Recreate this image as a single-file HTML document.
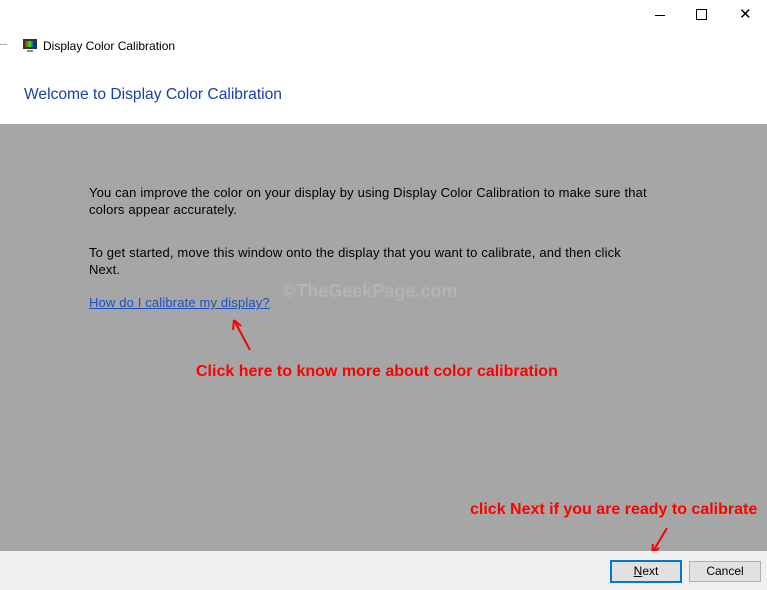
<!DOCTYPE html>
<html><head><style>
body{margin:0;width:767px;height:590px;position:relative;overflow:hidden;background:#fff;font-family:"Liberation Sans",sans-serif;}
.a{position:absolute;}
.t{font-size:13px;color:#000;white-space:nowrap;letter-spacing:0.15px;}
.red{color:#f00;font-weight:bold;font-size:16px;white-space:nowrap;}
.btn{position:absolute;top:561px;height:19px;background:#e1e1e1;border:1px solid #adadad;font-size:12px;text-align:center;line-height:19px;}
</style></head><body>
<div class="a" style="left:0;top:44px;width:7px;height:1px;background:#aaa"></div>
<div class="a" style="left:655px;top:15px;width:10px;height:1px;background:#000"></div>
<div class="a" style="left:696px;top:9px;width:9px;height:9px;border:1px solid #000"></div>
<div class="a" style="left:739px;top:5px;font-size:15px;">✕</div>
<svg class="a" style="left:22px;top:38px" width="16" height="15"><rect x="1" y="1" width="14" height="10" fill="#333"/><rect x="3" y="3" width="10" height="6" fill="url(#g)"/><defs><linearGradient id="g"><stop offset="0" stop-color="#f00"/><stop offset=".5" stop-color="#0f0"/><stop offset="1" stop-color="#00f"/></linearGradient></defs><rect x="5" y="12" width="6" height="2" fill="#888"/></svg>
<div class="a" style="left:43px;top:39px;font-size:12px;">Display Color Calibration</div>
<div class="a" style="left:24px;top:86px;font-size:15.6px;color:#1a3fa6;white-space:nowrap">Welcome to Display Color Calibration</div>
<div class="a" style="left:0;top:124px;width:767px;height:427px;background:#a6a6a6"></div>
<div class="a t" style="left:89px;top:184px;line-height:17px;">You can improve the color on your display by using Display Color Calibration to make sure that<br>colors appear accurately.</div>
<div class="a t" style="left:89px;top:244px;line-height:17px;">To get started, move this window onto the display that you want to calibrate, and then click<br>Next.</div>
<div class="a t" style="left:89px;top:295px;color:#1f4fc4;text-decoration:underline">How do I calibrate my display?</div>
<div class="a" style="left:283px;top:281px;font-size:18px;color:#b4b4b4;font-weight:bold">©TheGeekPage.com</div>
<svg class="a" style="left:225px;top:315px" width="30" height="40"><path d="M25 35 L9 5 M9 5 L8 15 M9 5 L16 11" stroke="#f00" stroke-width="2" fill="none"/></svg>
<div class="a red" style="left:196px;top:363px;">Click here to know more about color calibration</div>
<div class="a red" style="left:470px;top:501px;">click Next if you are ready to calibrate</div>
<svg class="a" style="left:645px;top:525px" width="30" height="35"><path d="M22 3 L7 28 M7 28 L8 19 M7 28 L14 23" stroke="#f00" stroke-width="2" fill="none"/></svg>
<div class="a" style="left:0;top:551px;width:767px;height:39px;background:#f0f0f0"></div>
<div class="btn" style="left:610px;width:68px;border:2px solid #0078d7;top:560px;height:19px;"><u>N</u>ext</div>
<div class="btn" style="left:689px;width:70px;">Cancel</div>
</body></html>
